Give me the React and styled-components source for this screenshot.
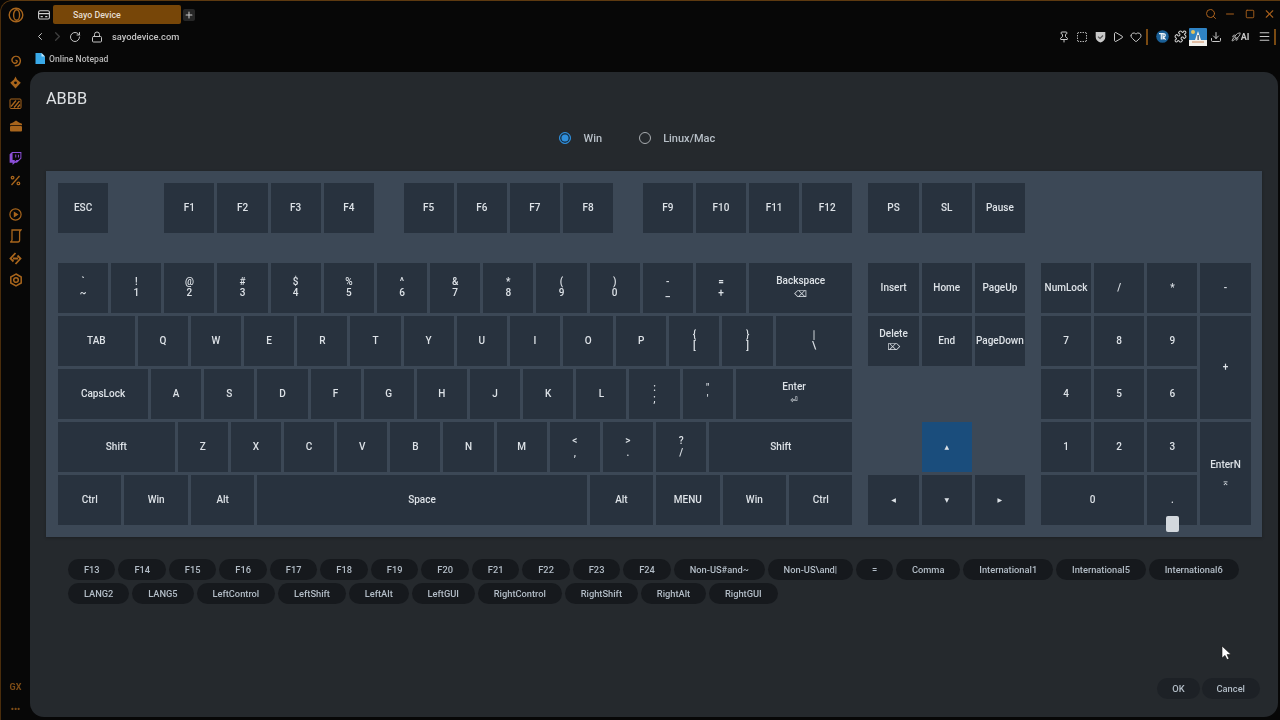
import React from 'react';
import styled, { createGlobalStyle } from 'styled-components';
import {
  ChevronLeft,
  ChevronRight,
  RotateCw,
  Lock,
  Pin,
  Heart,
  Download,
  Menu,
  Search,
  Minus,
  Square,
  X,
  Plus,
  Puzzle,
  Play,
  Rocket,
  SquareDashed,
} from 'lucide-react';
import { FaTwitch } from 'react-icons/fa';

const UNIT = 53.17;
const keyWidth = u => u * UNIT - 3;

const orange = '#a8651c';
const font = 'Roboto, "DejaVu Sans", sans-serif';

const GlobalStyle = createGlobalStyle`
  html, body {
    margin: 0;
    padding: 0;
    width: 1280px;
    height: 720px;
    overflow: hidden;
    background: #060606;
  }
`;

const Window = styled.div`
  display: flex;
  width: 1280px;
  height: 720px;
  box-sizing: border-box;
  background: #070707;
  font-family: ${font};
  border-top: 1px solid #5e3a10;
  border-left: 1px solid #4a2d0c;
  border-top-left-radius: 12px;
  filter: blur(0.3px);
  position: relative;
`;

const Sidebar = styled.nav`
  flex: 0 0 29px;
  display: flex;
  flex-direction: column;
  padding-top: 3px;
  color: ${orange};
`;
const SideGroup = styled.div`
  display: flex;
  flex-direction: column;
  margin-top: ${props => props.$top || 0}px;
`;
const SideSlot = styled.div`
  height: 22px;
  display: flex;
  align-items: center;
  justify-content: center;
  color: ${props => props.$color || orange};
  font-size: ${props => props.$size || 9}px;
  font-weight: 700;
`;
const SideFoot = styled(SideGroup)`
  margin-top: auto;
`;

const Main = styled.div`
  flex: 1;
  min-width: 0;
  display: flex;
  flex-direction: column;
`;

const TabBar = styled.div`
  height: 25px;
  flex: none;
  display: flex;
  align-items: flex-start;
  padding: 4px 0 0 4px;
  box-sizing: border-box;
  color: #cfcfcf;
`;
const TabIcon = styled.div`
  width: 19px;
  height: 19px;
  display: flex;
  align-items: center;
  justify-content: center;
`;
const Tab = styled.div`
  width: 128px;
  height: 19px;
  padding-left: 20px;
  box-sizing: border-box;
  border-radius: 2px;
  background: #774608;
  color: #e6ddd0;
  font-size: 8.8px;
  font-weight: 500;
  line-height: 20px;
`;
const NewTab = styled.div`
  width: 12px;
  height: 12px;
  margin: 4px 0 0 2px;
  border-radius: 2px;
  background: #262626;
  display: flex;
  align-items: center;
  justify-content: center;
  color: #c8c8c8;
`;
const WindowControls = styled.div`
  margin: 1px 0 0 auto;
  padding-right: 4.5px;
  display: flex;
  gap: 6.4px;
  color: #a9601c;
`;
const ControlSlot = styled.div`
  width: 13px;
  height: 16px;
  display: flex;
  align-items: center;
  justify-content: center;
`;

const AddressBar = styled.div`
  height: 21px;
  flex: none;
  display: flex;
  align-items: center;
  padding-left: 4px;
  color: #c4c4c4;
`;
const NavIcon = styled.div`
  width: ${props => props.$w}px;
  display: flex;
  align-items: center;
  justify-content: center;
  color: ${props => (props.$dim ? '#3f3f3f' : 'inherit')};
`;
const Url = styled.span`
  font-size: 9.3px;
  font-weight: 500;
  color: #c2c2c2;
`;
const Tools = styled.div`
  margin-left: auto;
  padding-right: 2px;
  display: flex;
  align-items: center;
  color: #c9c9c9;
`;
const ToolSlot = styled.div`
  width: ${props => props.$w || 18}px;
  height: 18px;
  display: flex;
  align-items: center;
  justify-content: center;
  font-size: 9px;
  font-weight: 700;
`;
const ToolBar = styled.div`
  width: 2px;
  height: 16px;
  margin: 0 ${props => props.$right || 0}px 0 ${props => props.$left || 0}px;
  background: #7a4a12;
`;

const Bookmarks = styled.div`
  height: 25px;
  flex: none;
  box-sizing: border-box;
  padding: 0 0 2px 5px;
  display: flex;
  align-items: center;
  gap: 4px;
  font-size: 8.6px;
  font-weight: 500;
  color: #b9b9b9;
`;

const Dialog = styled.section`
  flex: 1;
  min-height: 0;
  margin: 0 2px 3px 0;
  padding: 0 16px 18.5px;
  border-radius: 14px;
  background: #25292d;
  display: flex;
  flex-direction: column;
  color: #d9dde1;
`;
const Title = styled.h2`
  margin: 17px 0 0;
  height: 19px;
  font-size: 16.3px;
  line-height: 19px;
  font-weight: 400;
  color: #dfe2e5;
`;
const RadioRow = styled.div`
  margin-top: 22px;
  height: 16px;
  padding-left: 513px;
  display: flex;
  align-items: center;
  font-size: 11px;
  font-weight: 500;
  color: #b7bfc7;
`;
const Radio = styled.span`
  width: 12px;
  height: 12px;
  box-sizing: border-box;
  border-radius: 50%;
  border: 1.5px solid ${props => (props.$on ? '#2f8fdc' : '#a9adb1')};
  background: ${props => (props.$on ? '#2f8fdc' : 'transparent')};
  box-shadow: ${props => (props.$on ? 'inset 0 0 0 1.5px #17324a' : 'none')};
`;
const RadioLabel = styled.span`
  margin: 0 ${props => props.$after || 0}px 0 12.5px;
`;

const Panel = styled.div`
  margin-top: 25px;
  padding: 12px 11px 11.5px 12px;
  display: flex;
  gap: 16px;
  background: #3c4856;
  box-shadow: 0 1px 3px rgba(0, 0, 0, 0.25);
`;
const MainBlock = styled.div`
  display: flex;
  flex-direction: column;
  gap: 30px;
`;
const Rows = styled.div`
  display: flex;
  flex-direction: column;
  gap: 3.1px;
`;
const KeyRow = styled.div`
  display: flex;
  gap: 3px;
  height: 50px;
`;
const KeyCap = styled.div`
  display: flex;
  flex-direction: column;
  align-items: center;
  justify-content: center;
  background: ${props => (props.$active ? '#1a4d7c' : '#28323e')};
  color: #dde2e7;
  font-size: 10px;
  font-weight: 500;
  line-height: 10.5px;
  white-space: nowrap;
`;
const RowKey = styled(KeyCap)`
  flex: 0 0 ${props => keyWidth(props.$u || 1)}px;
`;
const GridKey = styled(KeyCap)`
  position: relative;
  grid-column: span ${props => props.$cols || 1};
  grid-row: span ${props => props.$rows || 1};
`;
const Gap = styled.div`
  flex: 0 0 ${props => keyWidth(props.$u || 1)}px;
  grid-column: span ${props => props.$cols || 1};
`;
const Glyph = styled.span`
  font-size: ${props => props.$size || 10}px;
  line-height: 12px;
  margin-top: ${props => props.$top || 0}px;
`;
const KeyGrid = styled.div`
  display: grid;
  grid-template-columns: repeat(${props => props.$cols}, ${keyWidth(1)}px);
  grid-auto-rows: 50px;
  gap: 3.1px 3px;
  margin-top: ${props => props.$top || 0}px;
`;
const Thumb = styled.div`
  position: absolute;
  left: 18.5px;
  bottom: -6.5px;
  width: 13px;
  height: 16px;
  border-radius: 2px;
  background: #d3d8dd;
`;

const Chips = styled.div`
  margin-top: 22.5px;
  padding-left: 22px;
  display: flex;
  flex-wrap: wrap;
  gap: 3px;
`;
const Chip = styled.div`
  height: 21px;
  padding: 0 15.9px;
  border-radius: 11px;
  background: #16191d;
  color: #b3bdc7;
  font-size: 9.3px;
  font-weight: 500;
  line-height: 21px;
`;
const Footer = styled.div`
  margin-top: auto;
  padding-right: 2px;
  display: flex;
  justify-content: flex-end;
  gap: 2px;
`;
const FooterChip = styled(Chip)`
  padding: 0 15px;
  background: #1d2126;
`;
const Cursor = styled.svg`
  position: absolute;
  left: 1220px;
  top: 644px;
`;

const fnRow = [
  ['ESC'], [null, 1], ['F1'], ['F2'], ['F3'], ['F4'], [null, 0.5],
  ['F5'], ['F6'], ['F7'], ['F8'], [null, 0.5],
  ['F9'], ['F10'], ['F11'], ['F12'],
];

const mainRows = [
  [
    ['`|~'], ['!|1'], ['@|2'], ['#|3'], ['$|4'], ['%|5'], ['^|6'], ['&|7'],
    ['*|8'], ['(|9'], [')|0'], ['-|_'], ['=|+'], ['Backspace|⌫', 2],
  ],
  [
    ['TAB', 1.5], ['Q'], ['W'], ['E'], ['R'], ['T'], ['Y'], ['U'], ['I'], ['O'], ['P'],
    ['{|['], ['}|]'], ['\u2223|\\', 1.5],
  ],
  [
    ['CapsLock', 1.75], ['A'], ['S'], ['D'], ['F'], ['G'], ['H'], ['J'], ['K'], ['L'],
    [':|;'], ['"|\''], ['Enter|⏎', 2.25],
  ],
  [
    ['Shift', 2.25], ['Z'], ['X'], ['C'], ['V'], ['B'], ['N'], ['M'],
    ['<|,'], ['>|.'], ['?|/'], ['Shift', 2.75],
  ],
  [
    ['Ctrl', 1.25], ['Win', 1.25], ['Alt', 1.25], ['Space', 6.25],
    ['Alt', 1.25], ['MENU', 1.25], ['Win', 1.25], ['Ctrl', 1.25],
  ],
];

const chips = [
  'F13', 'F14', 'F15', 'F16', 'F17', 'F18', 'F19', 'F20', 'F21', 'F22', 'F23', 'F24',
  'Non-US#and~', 'Non-US\\and|', '=', 'Comma', 'International1', 'International5', 'International6',
  'LANG2', 'LANG5', 'LeftControl', 'LeftShift', 'LeftAlt', 'LeftGUI',
  'RightControl', 'RightShift', 'RightAlt', 'RightGUI',
];

const Label = ({ text }) => {
  if (text.length > 1 && text.includes('|')) {
    const [top, bottom] = text.split('|');
    const small = bottom.length === 1 && '⌫⏎⌦⌅'.includes(bottom);
    return (
      <>
        <span>{top}</span>
        <Glyph $size={small ? 9 : 10} $top={small ? 2 : 0}>{bottom}</Glyph>
      </>
    );
  }
  return text;
};

const LogoIcon = () => (
  <svg width="16" height="16" viewBox="0 0 16 16" fill="none" stroke={orange} strokeWidth="1.4">
    <circle cx="8" cy="8" r="6.8" />
    <ellipse cx="8.6" cy="8" rx="3" ry="5.2" />
  </svg>
);
const SwirlIcon = () => (
  <svg width="13" height="13" viewBox="0 0 13 13" fill="none" stroke="currentColor" strokeWidth="1.4">
    <path d="M6.5 6.5a1.2 1.2 0 0 1 1.7 1.3 2.6 2.6 0 0 1-3.4 1.2A3.6 3.6 0 0 1 3.4 4.4 4.6 4.6 0 0 1 9.6 3a5 5 0 0 1 1.6 5 5 5 0 0 1-5.4 3.8" />
  </svg>
);
const DropIcon = () => (
  <svg width="13" height="13" viewBox="0 0 13 13" fill="currentColor">
    <path d="M6.5 0.5 8 3.5l3.8 3.2-5.3 5.8L1.2 6.7 5 3.5z" />
    <circle cx="6.5" cy="6.8" r="1.4" fill="#070707" />
  </svg>
);
const NewsIcon = () => (
  <svg width="13" height="12" viewBox="0 0 13 12" fill="none" stroke="currentColor">
    <rect x="1" y="1" width="11" height="9.5" rx="1" />
    <path d="M2 8.5 7 2.5M5 9.5l5.5-6.5M8.5 9.5 11 6.5" strokeWidth="1.4" />
  </svg>
);
const BagIcon = () => (
  <svg width="14" height="12" viewBox="0 0 14 12" fill="currentColor">
    <path d="M4 2.6 7 .6l3 2 3 1.2v1.4H1V3.8z" />
    <rect x="1" y="6" width="12" height="5.6" rx="1" />
  </svg>
);
const PercentIcon = () => (
  <svg width="11" height="11" viewBox="0 0 11 11" fill="none" stroke="currentColor" strokeWidth="1.3">
    <path d="M9.5 1 1.5 10" />
    <circle cx="2.6" cy="2.6" r="1.3" />
    <circle cx="8.4" cy="8.4" r="1.3" />
  </svg>
);
const PlayRing = () => (
  <svg width="13" height="13" viewBox="0 0 13 13" fill="none" stroke="currentColor" strokeWidth="1.2">
    <circle cx="6.5" cy="6.5" r="5.6" />
    <path d="M5.4 4.6v3.8l3-1.9z" fill="currentColor" />
  </svg>
);
const ScrollIcon = () => (
  <svg width="13" height="14" viewBox="0 0 13 14" fill="none" stroke="currentColor" strokeWidth="1.3">
    <path d="M3 1h9l-1.4 1.6V11c0 1-.6 2-1.6 2H1.2c1-.3 1.8-1 1.8-2z" />
  </svg>
);
const DiamondIcon = () => (
  <svg width="13" height="13" viewBox="0 0 13 13" fill="none" stroke="currentColor" strokeWidth="1.8">
    <path d="M6.5 1 1.5 6.5l3 3M6.5 12l5-5.5-3-3M4 6.5h5" />
  </svg>
);
const GearIcon = () => (
  <svg width="14" height="14" viewBox="0 0 14 14" fill="none" stroke="currentColor" strokeWidth="1.5">
    <path d="M7 1l5.2 3v6L7 13l-5.2-3V4z" />
    <circle cx="7" cy="7" r="2.3" />
  </svg>
);
const SnapIcon = () => (
  <svg width="12" height="10" viewBox="0 0 12 10" fill="none" stroke="currentColor" strokeWidth="1.1">
    <rect x="0.6" y="0.8" width="10.8" height="8.2" rx="1.4" />
    <path d="M.8 3.6h10.4M2.6 6.6h2.2M7.2 6.6h2.2" />
  </svg>
);
const FileIcon = () => (
  <svg width="10" height="11" viewBox="0 0 10 11">
    <path d="M.5 0h6L10 3.4V11H.5z" fill="#39a9e8" />
    <path d="M6.5 0 10 3.4H6.5z" fill="#bfe6fa" />
  </svg>
);
const ShieldIcon = () => (
  <svg width="11" height="12" viewBox="0 0 11 12">
    <path d="M.7 1h9.6v5c0 3-2.2 4.6-4.8 5.6C2.9 10.6.7 9 .7 6z" fill="#c9c9c9" />
    <path d="M3 5.6 5 7.5l3-3" fill="none" stroke="#5a5a5a" strokeWidth="1.2" />
  </svg>
);
const AccountIcon = () => (
  <svg width="13" height="13" viewBox="0 0 13 13">
    <circle cx="6.5" cy="6.5" r="6.3" fill="#1a5f96" />
    <path d="M3 3.6h4.6M5.3 3.6v6M7 3.6v6M7 7l2.6 2.6M7 3.6c3 0 3 3.4 0 3.4" fill="none" stroke="#eef4f8" strokeWidth="1.2" />
  </svg>
);
const ThumbImage = () => (
  <svg width="18" height="18" viewBox="0 0 18 18">
    <rect width="18" height="18" rx="1" fill="#2f83c4" />
    <rect y="12" width="18" height="6" fill="#f3f1ec" />
    <circle cx="4" cy="4" r="2" fill="#e6c35a" />
    <path d="M9 3l3 9H6z" fill="#f3f1ec" />
    <path d="M8.5 7h1.2v5H8.5z" fill="#23405e" />
    <path d="M3 14h12" stroke="#d08a5c" strokeWidth="1" />
  </svg>
);

const sideTop = [<SwirlIcon />, <DropIcon />, <NewsIcon />, <BagIcon />];
const sideBottom = [<PlayRing />, <ScrollIcon />, <DiamondIcon />, <GearIcon />];

const App = () => (
  <Window>
    <GlobalStyle />
    <Sidebar>
      <SideSlot><LogoIcon /></SideSlot>
      <SideGroup $top={23}>
        {sideTop.map((icon, i) => <SideSlot key={i}>{icon}</SideSlot>)}
      </SideGroup>
      <SideGroup $top={10}>
        <SideSlot $color="#8c4fd8" $size={13}><FaTwitch /></SideSlot>
        <SideSlot><PercentIcon /></SideSlot>
      </SideGroup>
      <SideGroup $top={12}>
        {sideBottom.map((icon, i) => <SideSlot key={i}>{icon}</SideSlot>)}
      </SideGroup>
      <SideFoot>
        <SideSlot $color="#7d4c16">GX</SideSlot>
        <SideSlot $color="#7d4c16">•••</SideSlot>
      </SideFoot>
    </Sidebar>
    <Main>
      <TabBar>
        <TabIcon><SnapIcon /></TabIcon>
        <Tab>Sayo Device</Tab>
        <NewTab><Plus size={10} strokeWidth={2.5} /></NewTab>
        <WindowControls>
          <ControlSlot><Search size={12} /></ControlSlot>
          <ControlSlot><Minus size={12} /></ControlSlot>
          <ControlSlot><Square size={10} strokeWidth={2.2} /></ControlSlot>
          <ControlSlot><X size={14} /></ControlSlot>
        </WindowControls>
      </TabBar>
      <AddressBar>
        <NavIcon $w={12}><ChevronLeft size={15} /></NavIcon>
        <NavIcon $w={22} $dim><ChevronRight size={15} /></NavIcon>
        <NavIcon $w={14}><RotateCw size={12} /></NavIcon>
        <NavIcon $w={30}><Lock size={12} /></NavIcon>
        <Url>sayodevice.com</Url>
        <Tools>
          <ToolSlot><Pin size={12} /></ToolSlot>
          <ToolSlot><SquareDashed size={12} /></ToolSlot>
          <ToolSlot><ShieldIcon /></ToolSlot>
          <ToolSlot><Play size={12} /></ToolSlot>
          <ToolSlot><Heart size={12} /></ToolSlot>
          <ToolBar $left={1} $right={5} />
          <ToolSlot><AccountIcon /></ToolSlot>
          <ToolSlot><Puzzle size={13} /></ToolSlot>
          <ToolSlot><ThumbImage /></ToolSlot>
          <ToolSlot><Download size={12} /></ToolSlot>
          <ToolSlot $w={30}><Rocket size={10} />AI</ToolSlot>
          <ToolSlot><Menu size={13} /></ToolSlot>
          <ToolBar $left={1} $right={2} />
        </Tools>
      </AddressBar>
      <Bookmarks>
        <FileIcon />
        Online Notepad
      </Bookmarks>
      <Dialog>
        <Title>ABBB</Title>
        <RadioRow>
          <Radio $on />
          <RadioLabel $after={36.5}>Win</RadioLabel>
          <Radio />
          <RadioLabel>Linux/Mac</RadioLabel>
        </RadioRow>
        <Panel>
          <MainBlock>
            <KeyRow>
              {fnRow.map(([text, gap], i) =>
                text ? <RowKey key={i}>{text}</RowKey> : <Gap key={i} $u={gap} />
              )}
            </KeyRow>
            <Rows>
              {mainRows.map((row, r) => (
                <KeyRow key={r}>
                  {row.map(([text, u], i) => (
                    <RowKey key={i} $u={u}><Label text={text} /></RowKey>
                  ))}
                </KeyRow>
              ))}
            </Rows>
          </MainBlock>
          <MainBlock>
            <KeyGrid $cols={3}>
              <GridKey>PS</GridKey>
              <GridKey>SL</GridKey>
              <GridKey>Pause</GridKey>
            </KeyGrid>
            <KeyGrid $cols={3}>
              <GridKey>Insert</GridKey>
              <GridKey>Home</GridKey>
              <GridKey>PageUp</GridKey>
              <GridKey><Label text="Delete|⌦" /></GridKey>
              <GridKey>End</GridKey>
              <GridKey>PageDown</GridKey>
              <Gap $cols={3} />
              <Gap />
              <GridKey $active><Glyph $size={6}>▲</Glyph></GridKey>
              <Gap />
              <GridKey><Glyph $size={6}>◀</Glyph></GridKey>
              <GridKey><Glyph $size={6}>▼</Glyph></GridKey>
              <GridKey><Glyph $size={6}>▶</Glyph></GridKey>
            </KeyGrid>
          </MainBlock>
          <KeyGrid $cols={4} $top={80}>
            <GridKey>NumLock</GridKey>
            <GridKey>/</GridKey>
            <GridKey>*</GridKey>
            <GridKey>-</GridKey>
            <GridKey>7</GridKey>
            <GridKey>8</GridKey>
            <GridKey>9</GridKey>
            <GridKey $rows={2}>+</GridKey>
            <GridKey>4</GridKey>
            <GridKey>5</GridKey>
            <GridKey>6</GridKey>
            <GridKey>1</GridKey>
            <GridKey>2</GridKey>
            <GridKey>3</GridKey>
            <GridKey $rows={2}>
              <span>EnterN</span>
              <Glyph $size={9} $top={5}>⌅</Glyph>
            </GridKey>
            <GridKey $cols={2}>0</GridKey>
            <GridKey>
              .
              <Thumb />
            </GridKey>
          </KeyGrid>
        </Panel>
        <Chips>
          {chips.map(text => <Chip key={text}>{text}</Chip>)}
        </Chips>
        <Footer>
          <FooterChip>OK</FooterChip>
          <FooterChip>Cancel</FooterChip>
        </Footer>
      </Dialog>
    </Main>
    <Cursor width="11" height="16" viewBox="0 0 11 16">
      <path d="M1 1v12l3-2.6 2 4.2 2-.9-2-4.1h4z" fill="#fff" stroke="#111" strokeWidth="0.6" />
    </Cursor>
  </Window>
);

export default App;
